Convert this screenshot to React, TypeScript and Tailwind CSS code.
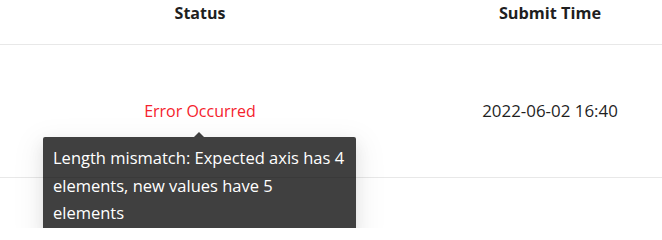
import React from "react";

export default function App() {
  return (
    <div
      className="relative w-[662px] h-[228px] overflow-hidden bg-white text-[16px] text-[#1f1f1f]"
      style={{ fontFamily: '"Open Sans", "Noto Sans", sans-serif' }}
    >
      <div className="flex h-[45px] border-b border-[#e8e8e8]">
        <div className="w-[400px] shrink-0 pt-[1px] text-center font-bold leading-[24px]">Status</div>
        <div className="w-[300px] shrink-0 pt-[1px] text-center font-bold leading-[24px] text-[16.3px]">Submit Time</div>
      </div>
      <div className="flex h-[133px] items-center border-b border-[#e8e8e8]">
        <div className="w-[400px] shrink-0 text-center text-[#f5222d] leading-[24px]">Error Occurred</div>
        <div className="w-[300px] shrink-0 text-center leading-[24px] text-[16.9px]">2022-06-02 16:40</div>
      </div>

      <div className="absolute left-[43px] top-[132px] w-[313px]">
        <div className="flex justify-center">
          <div className="ml-[-2px] h-0 w-0 border-x-[5px] border-b-[5px] border-x-transparent border-b-[rgba(0,0,0,0.75)]" />
        </div>
        <div className="rounded-[2px] bg-[rgba(0,0,0,0.75)] px-[10px] pt-[7px] pb-[8px] text-[16.5px] text-white leading-[27.5px] shadow-[0_3px_6px_-4px_rgba(0,0,0,0.12),0_6px_16px_0_rgba(0,0,0,0.08),0_9px_28px_8px_rgba(0,0,0,0.05)]">
          Length mismatch: Expected axis has 4<br />
          elements, new values have 5<br />
          elements
        </div>
      </div>
    </div>
  );
}
